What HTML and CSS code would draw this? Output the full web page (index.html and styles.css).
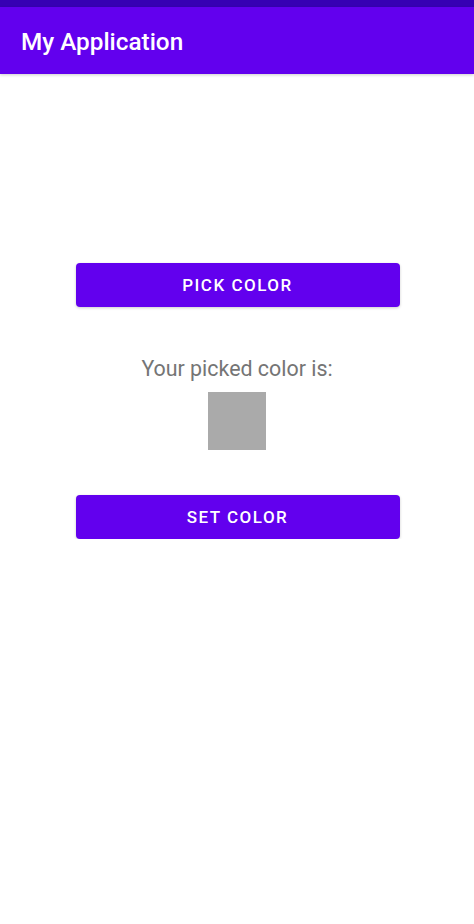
FILE: index.html
```html
<!DOCTYPE html>
<html>
<head>
<meta charset="utf-8">
<link rel="stylesheet" href="styles.css">
</head>
<body>
<div class="status-bar"></div>
<header class="app-bar"><span class="title">My Application</span></header>
<main class="content">
  <button class="btn btn-pick">PICK COLOR</button>
  <div class="label">Your picked color is:</div>
  <div class="swatch"></div>
  <button class="btn btn-set">SET COLOR</button>
</main>
</body>
</html>
```
FILE: styles.css
```css
html, body {
  margin: 0;
  padding: 0;
  background: #ffffff;
  font-family: Roboto, "Liberation Sans", sans-serif;
}
.status-bar {
  height: 7px;
  background: #3700b3;
}
.app-bar {
  height: 67px;
  background: #6200ee;
  display: flex;
  align-items: center;
  padding-left: 21px;
  box-shadow: 0 1px 3px rgba(0,0,0,0.2);
}
.title {
  color: #ffffff;
  font-size: 24.3px;
  font-weight: 500;
  margin-top: 2px;
}
.content {
  display: flex;
  flex-direction: column;
  align-items: center;
  padding-top: 189px;
}
.btn {
  width: 324px;
  height: 44px;
  border: none;
  border-radius: 4px;
  background: #6200ee;
  color: #ffffff;
  font-family: Roboto, "Liberation Sans", sans-serif;
  font-weight: 500;
  font-size: 17px;
  letter-spacing: 1.5px;
  padding: 0;
  box-shadow: 0 1px 3px rgba(0,0,0,0.2);
}
.btn-pick {
  margin-left: 1px;
}
.label {
  margin-top: 48px;
  font-size: 21.4px;
  color: #757575;
  line-height: 28px;
}
.swatch {
  margin-top: 9px;
  width: 58px;
  height: 58px;
  background: #aaaaaa;
}
.btn-set {
  margin-top: 45px;
  margin-left: 1px;
}
```
